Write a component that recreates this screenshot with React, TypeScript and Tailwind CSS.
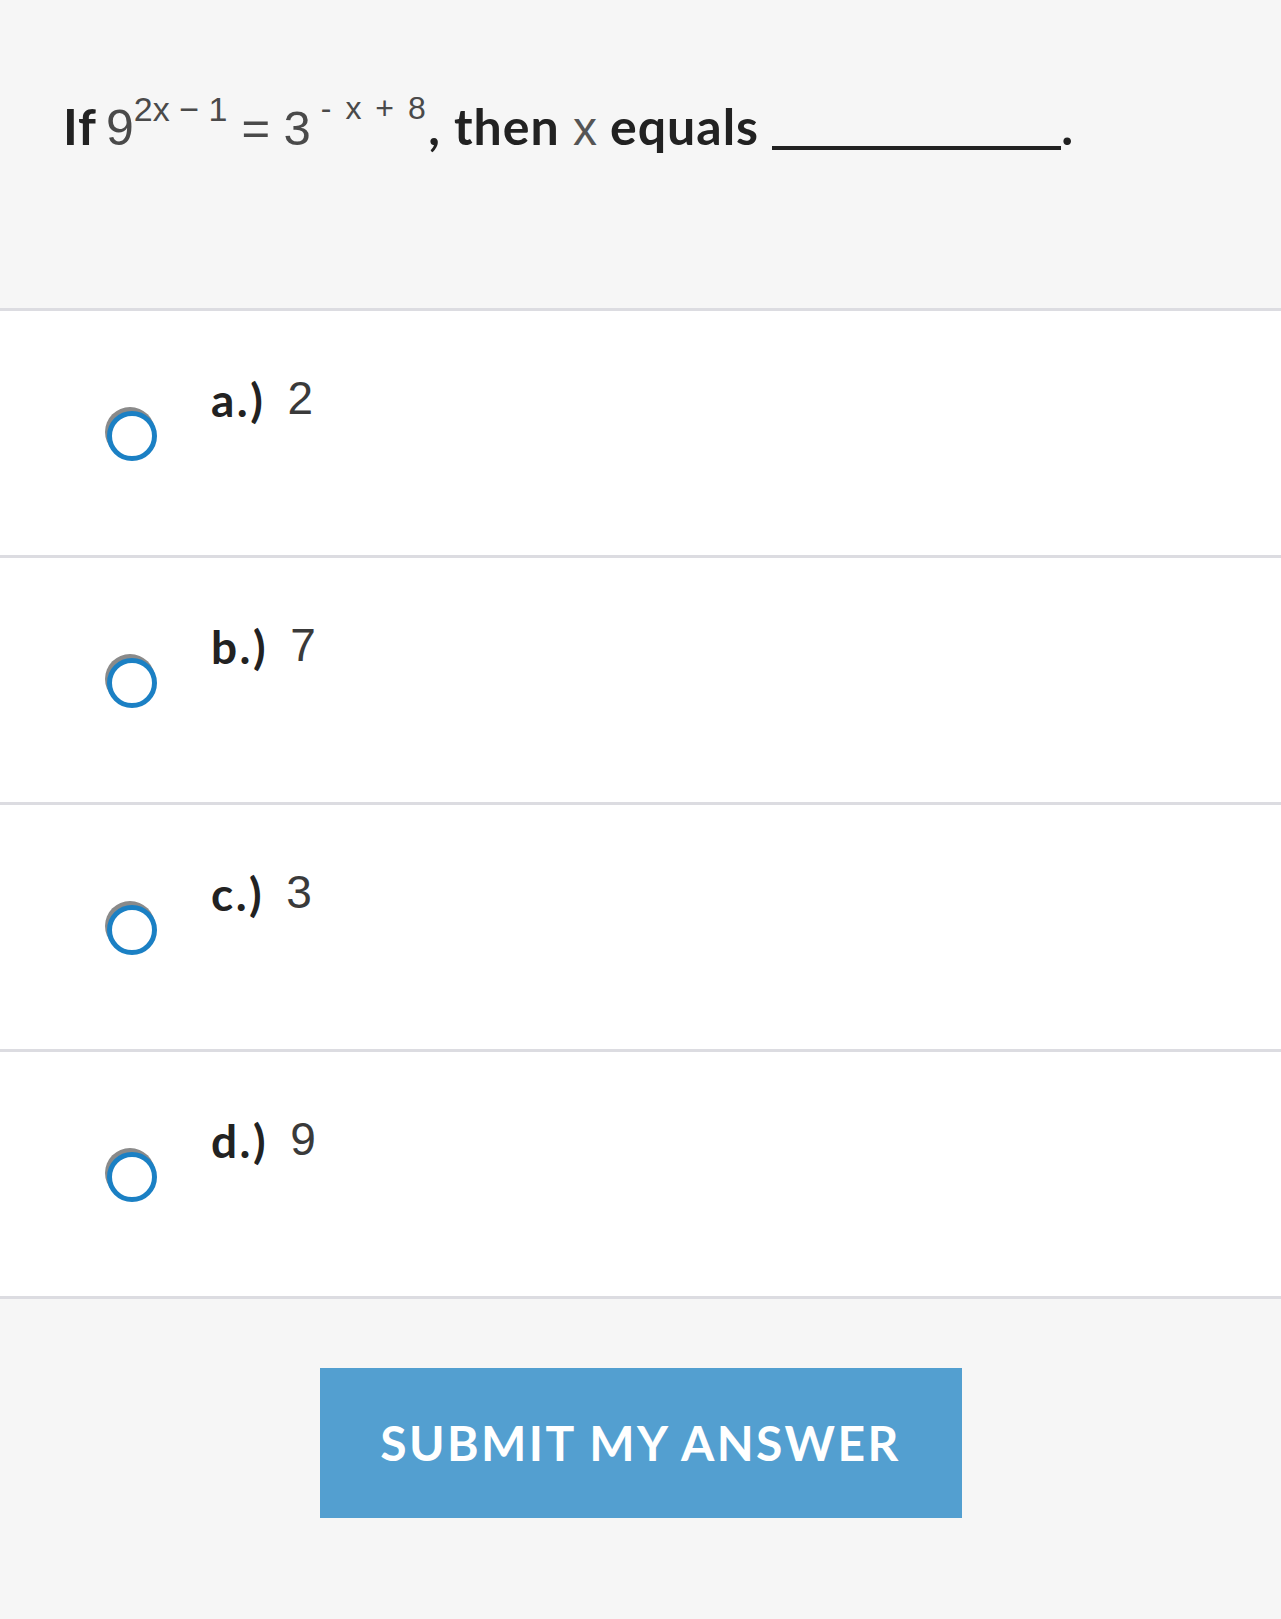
import React from 'react'

const OPTIONS = [
  { key: 'a.)', value: '2' },
  { key: 'b.)', value: '7' },
  { key: 'c.)', value: '3' },
  { key: 'd.)', value: '9' },
]

// radio ring with the grey offset shadow peeking out top-left
function Radio() {
  return (
    <div className="mt-[100px] h-[50px] w-[50px] shrink-0 rounded-full border-[5px] border-[#1b80c4] bg-white shadow-[-2px_-4px_0_#8a8a8a]" />
  )
}

function Question() {
  return (
    <p className="whitespace-nowrap font-[Lato,sans-serif] text-[50px] font-bold leading-[60px] tracking-[0.02em] text-[#222]">
      If
      <span className="ml-[9px] font-['Liberation_Sans',Arial,sans-serif] font-normal tracking-normal text-[#4a4a4a]">
        <span className="text-[50px]">9</span>
        <span className="relative top-[-24px] text-[34px]">2x &minus; 1</span>
        <span className="ml-[14px] text-[49px]">= 3</span>
        <span className="relative top-[-26px] ml-[10px] text-[32px] tracking-[2.5px]">- x + 8</span>
      </span>
      , then{' '}
      <span className="font-['Liberation_Sans',Arial,sans-serif] text-[48px] font-normal tracking-normal text-[#555]">x</span>{' '}
      equals{' '}
      <span className="inline-block w-[289px] border-b-[4px] border-[#222] align-[-5px]" />.
    </p>
  )
}

export default function App() {
  return (
    <div className="min-h-[1619px] bg-[#f6f6f6] font-[Lato,sans-serif]">
      <div className="h-[308px] pl-[63px] pt-[96px]">
        <Question />
      </div>

      <div className="bg-white">
        {OPTIONS.map((opt) => (
          <div
            key={opt.key}
            className="flex h-[247px] items-start border-t-[3px] border-[#dcdce1] pl-[107px]"
          >
            <Radio />
            <div className="ml-[54px] mt-[61px] flex items-baseline leading-[56px]">
              <span className="text-[46px] font-bold tracking-[2.5px] text-[#222]">{opt.key}</span>
              <span className="relative top-[-3px] ml-[22px] font-['Liberation_Sans',Arial,sans-serif] text-[46px] text-[#3a3a3a]">
                {opt.value}
              </span>
            </div>
          </div>
        ))}
      </div>

      <div className="border-t-[3px] border-[#dcdce1] pt-[69px]">
        <button className="mx-auto flex h-[150px] w-[642px] items-center justify-center bg-[#539fd0] text-[48px] font-bold tracking-[0.05em] text-white">
          SUBMIT MY ANSWER
        </button>
      </div>
    </div>
  )
}
